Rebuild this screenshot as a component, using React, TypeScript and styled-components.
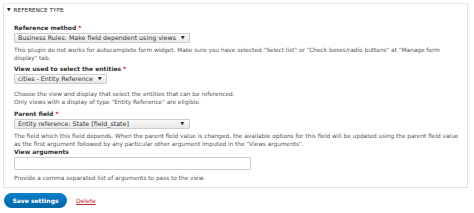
import React from "react";
import styled, { createGlobalStyle } from "styled-components";

const Global = createGlobalStyle`
  html, body {
    margin: 0;
    padding: 0;
    background: #fff;
  }
  body {
    font-family: "DejaVu Sans", Verdana, sans-serif;
    color: #333;
  }
`;

const Page = styled.div`
  padding: 3px 6px 0 3px;
`;

const Fieldset = styled.div`
  border: 1px solid #e2e2e2;
  border-top-color: #eaeaea;
  padding: 0 4px 5px 10px;
`;

const Legend = styled.div`
  font-size: 5.6px;
  line-height: 8px;
  letter-spacing: 0.1px;
  text-transform: uppercase;
  color: #222;
  padding: 2px 0 0 3px;
  margin-left: -10px;
  display: flex;
  align-items: center;
  gap: 3px;
`;

const Caret = styled.span`
  font-size: 4.5px;
`;

const Item = styled.div<{ $top: number }>`
  padding-top: ${(p) => p.$top}px;
`;

const Label = styled.div`
  font-weight: bold;
  font-size: 6px;
  line-height: 8px;
  color: #333;
`;

const Required = styled.span`
  color: #e00;
  margin-left: 2px;
`;

const Select = styled.div<{ $min?: number }>`
  display: flex;
  width: fit-content;
  min-width: ${(p) => p.$min ?? 0}px;
  height: 10px;
  margin-top: 1px;
  box-sizing: border-box;
  border: 1px solid #ccc;
  border-radius: 1px;
  background: linear-gradient(#fafafa, #e8e8e8);
  font-size: 6.3px;
  line-height: 8px;
  color: #333;
  align-items: center;
  justify-content: space-between;
  gap: 5px;
  padding: 0 5px 0 3px;
  white-space: nowrap;
`;

const Arrow = styled.span`
  font-size: 4.5px;
  color: #222;
`;

const Description = styled.div<{ $gap: number }>`
  font-size: 5.8px;
  line-height: 8px;
  color: #555;
  margin-top: ${(p) => p.$gap}px;
`;

const Input = styled.div`
  width: 237px;
  height: 13px;
  margin-top: 1px;
  box-sizing: border-box;
  border: 1px solid #ccc;
  border-radius: 1px;
  background: #fff;
`;

const Actions = styled.div`
  display: flex;
  align-items: center;
  gap: 9px;
  padding: 5px 0 0 1px;
`;

const Button = styled.div`
  background: linear-gradient(#0a7fca, #0067a8);
  color: #fff;
  font-weight: bold;
  font-size: 6px;
  height: 15px;
  width: 63px;
  border-radius: 8px;
  display: flex;
  align-items: center;
  justify-content: center;
`;

const DeleteLink = styled.span`
  color: #c1272d;
  font-size: 6px;
  text-decoration: underline;
`;

export default function App() {
  return (
    <Page>
      <Global />
      <Fieldset>
        <Legend>
          <Caret>▼</Caret>Reference type
        </Legend>
        <Item $top={10}>
          <Label>
            Reference method<Required>*</Required>
          </Label>
          <Select>
            Business Rules: Make field dependent using views <Arrow>▼</Arrow>
          </Select>
          <Description $gap={3}>
            This plugin do not works for autocomplete form widget. Make sure
            you have selected "Select list" or "Check boxes/radio buttons" at
            "Manage form display" tab.
          </Description>
        </Item>
        <Item $top={3}>
          <Label>
            View used to select the entities<Required>*</Required>
          </Label>
          <Select>
            cities - Entity Reference <Arrow>▼</Arrow>
          </Select>
          <Description $gap={6}>
            Choose the view and display that select the entities that can be
            referenced.
            <br />
            Only views with a display of type "Entity Reference" are eligible.
          </Description>
        </Item>
        <Item $top={4}>
          <Label>
            Parent field<Required>*</Required>
          </Label>
          <Select $min={176}>
            Entity reference: State [field_state] <Arrow>▼</Arrow>
          </Select>
          <Description $gap={3}>
            The field which this field depends. When the parent field value is
            changed, the available options for this field will be updated
            using the parent field value as the first argument followed by any
            particular other argument imputed in the "Views arguments".
          </Description>
        </Item>
        <Item $top={0}>
          <Label>View arguments</Label>
          <Input />
          <Description $gap={4}>
            Provide a comma separated list of arguments to pass to the view.
          </Description>
        </Item>
      </Fieldset>
      <Actions>
        <Button>Save settings</Button>
        <DeleteLink>Delete</DeleteLink>
      </Actions>
    </Page>
  );
}
